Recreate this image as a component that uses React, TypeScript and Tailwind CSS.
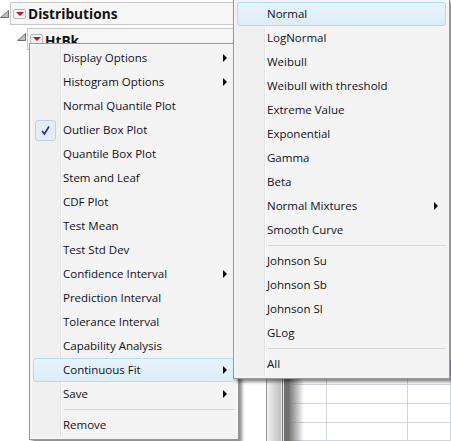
import React from "react";

type Row = { t?: string; sub?: boolean; hi?: boolean; check?: boolean; sep?: boolean };

const left: Row[] = [
  { t: "Display Options", sub: true },
  { t: "Histogram Options", sub: true },
  { t: "Normal Quantile Plot" },
  { t: "Outlier Box Plot", check: true },
  { t: "Quantile Box Plot" },
  { t: "Stem and Leaf" },
  { t: "CDF Plot" },
  { t: "Test Mean" },
  { t: "Test Std Dev" },
  { t: "Confidence Interval", sub: true },
  { t: "Prediction Interval" },
  { t: "Tolerance Interval" },
  { t: "Capability Analysis" },
  { t: "Continuous Fit", sub: true, hi: true },
  { t: "Save", sub: true },
  { sep: true },
  { t: "Remove" },
];

const right: Row[] = [
  { t: "Normal", hi: true },
  { t: "LogNormal" },
  { t: "Weibull" },
  { t: "Weibull with threshold" },
  { t: "Extreme Value" },
  { t: "Exponential" },
  { t: "Gamma" },
  { t: "Beta" },
  { t: "Normal Mixtures", sub: true },
  { t: "Smooth Curve" },
  { sep: true },
  { t: "Johnson Su" },
  { t: "Johnson Sb" },
  { t: "Johnson Sl" },
  { t: "GLog" },
  { sep: true },
  { t: "All" },
];

function RedButton() {
  return (
    <div className="shrink-0 w-[13px] h-[10px] rounded-[2px] border border-[#b8b8b8] bg-[#f4f4f4] flex items-center justify-center">
      <div className="w-0 h-0 border-x-[4px] border-x-transparent border-t-[4px] border-t-[#c8102e]" />
    </div>
  );
}

function Disclosure() {
  return (
    <svg width="9" height="8" viewBox="0 0 9 8" className="shrink-0">
      <path d="M8.5 0.5 L8.5 7.5 L0.5 7.5 Z" fill="#bdbdbd" stroke="#707070" strokeWidth="1" />
    </svg>
  );
}

function Menu({ rows, width }: { rows: Row[]; width: string }) {
  return (
    <div className={`relative ${width} bg-[#f4f4f4] border border-[#979797] py-[2px] pl-[3px] pr-[3px] shadow-[3px_3px_3px_rgba(0,0,0,0.45)]`}>
      <div className="absolute left-[2px] top-[2px] bottom-[2px] w-[28px] bg-[#f0f0f0]" />
      <div className="absolute left-[30px] top-[2px] bottom-[2px] w-[2px] border-l border-l-[#e2e3e3] border-r border-r-white" />
      <div className="relative flex flex-col">
        {rows.map((r, i) =>
          r.sep ? (
            <div key={i} className="h-[7px] flex items-start pt-[3px] pl-[31px]">
              <div className="h-px w-full bg-[#d7d7d7]" />
            </div>
          ) : (
            <div
              key={i}
              className={`h-[24px] flex items-center rounded-[3px] border ${
                r.hi ? "border-[#aeddf5] bg-gradient-to-b from-[#e8f3fa] to-[#dcedf8]" : "border-transparent"
              }`}
            >
              <div className="w-[29px] shrink-0 flex items-center justify-start">
                {r.check && (
                  <div className="w-[21px] h-[21px] ml-[1px] rounded-[3px] border border-[#b8d2ea] bg-[#e4ecf6] flex items-center justify-center">
                    <svg width="11" height="11" viewBox="0 0 11 11">
                      <path d="M2 6 L4.4 9 L9 1.5" fill="none" stroke="#1f2f9c" strokeWidth="1.6" />
                    </svg>
                  </div>
                )}
              </div>
              <span className="flex-1 whitespace-nowrap text-[11.5px] leading-[22px] -translate-y-[0.5px] text-[#10101c]">{r.t}</span>
              {r.sub && (
                <div className="w-0 h-0 mr-[7px] border-y-[4px] border-y-transparent border-l-[4px] border-l-black" />
              )}
            </div>
          )
        )}
      </div>
    </div>
  );
}

export default function App() {
  return (
    <div
      className="relative w-[451px] h-[441px] overflow-hidden bg-white"
      style={{ fontFamily: '"Open Sans", "Noto Sans", sans-serif' }}
    >
      <div className="flex items-center gap-[1px] pt-[2px]">
        <Disclosure />
        <div className="w-[234px] h-[23px] border border-[#c8c8c8] bg-[#f6f6f6] flex items-center gap-[2px] pl-[2px]">
          <RedButton />
          <span className="font-bold text-[13.7px] translate-y-[1px] text-[#111]">Distributions</span>
        </div>
      </div>
      <div className="flex items-start gap-[1px] pl-[17px] mt-[3px]">
        <div className="mt-[5px] flex"><Disclosure /></div>
        <div className="w-[210px] h-[22px] border border-[#c8c8c8] bg-[#f6f6f6] flex items-start gap-[2px] pl-[2px] pt-[5px]">
          <RedButton />
          <span className="font-bold text-[13.7px] leading-[14px] text-[#111]">HtBk</span>
        </div>
      </div>

      {/* worksheet behind the menus */}
      <div className="absolute left-[266px] top-[360px] right-0 bottom-0 flex">
        <div className="w-[1px] bg-[#9a9a9a]" />
        <div className="w-[14px] bg-gradient-to-r from-[#f0f0f0] to-[#c0c0c0]" />
        <div className="w-[1px] bg-[#e8e8e8]" />
        <div className="w-[1px] bg-[#707070]" />
        <div className="w-[1px] bg-[#e8e8e8]" />
        <div className="w-[5px] bg-[#707070]" />
        <div className="relative flex-1 bg-white">
          <div className="absolute inset-0 grid grid-cols-[38px_81px_1fr] grid-rows-[25px_19px_19px_1fr]">
            {Array.from({ length: 12 }).map((_, i) => (
              <div key={i} className="border-r border-b border-[#d3d3dd]" />
            ))}
          </div>
          <div className="absolute inset-y-0 left-0 w-[15px] bg-gradient-to-r from-[#777] to-transparent" />
        </div>
      </div>

      {/* the open menus */}
      <div className="absolute left-[29px] top-[43px]">
        <Menu rows={left} width="w-[210px]" />
      </div>
      <div className="absolute left-[233px] top-[-1px]">
        <Menu rows={right} width="w-[217px]" />
      </div>
    </div>
  );
}
